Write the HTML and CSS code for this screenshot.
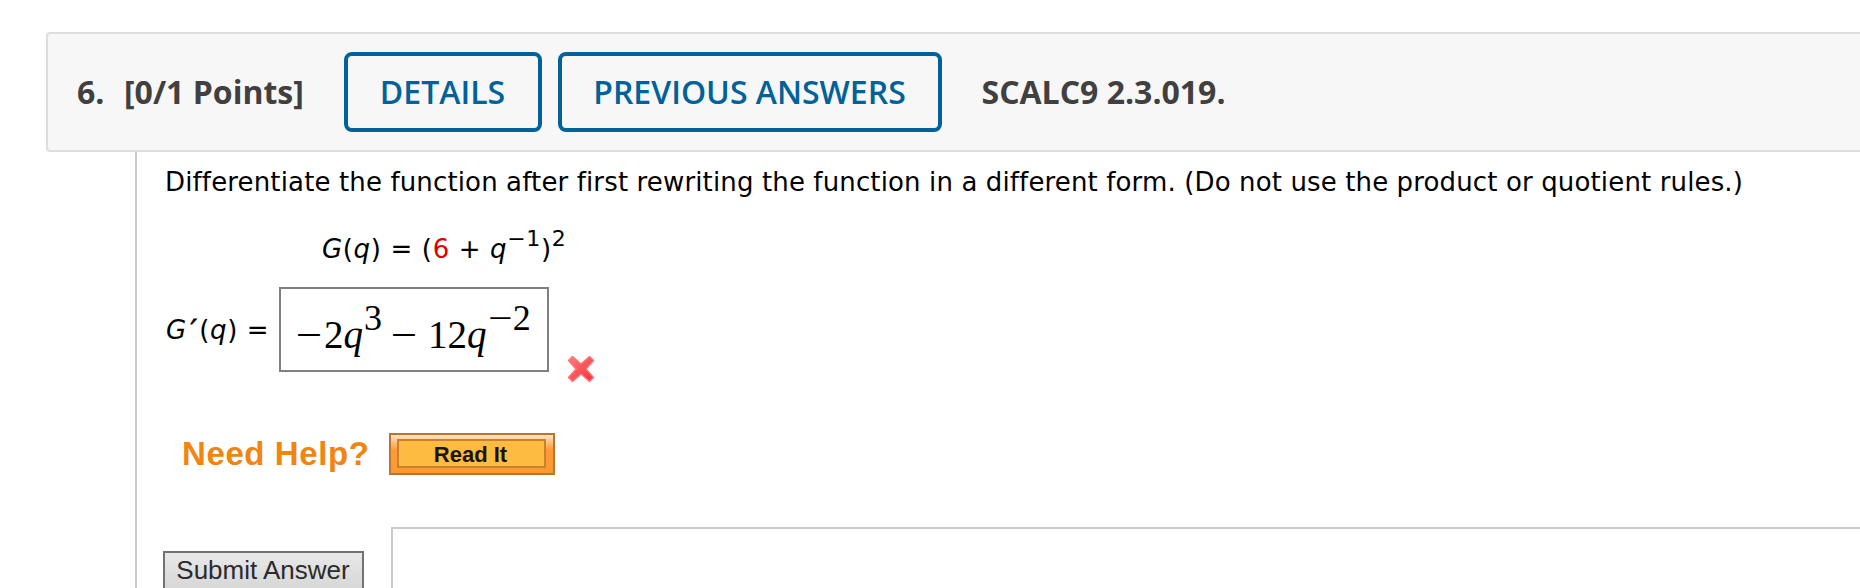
FILE: index.html
```
<!DOCTYPE html>
<html lang="en">
<head>
    <meta charset="UTF-8">
    <meta name="viewport" content="width=device-width, initial-scale=1.0">
    <title>SCALC9 2.3.019</title>
    <link rel="stylesheet" href="styles.css">
</head>
<body>

<div class="question">
    <header class="question-header">
        <span class="number">6.</span>
        <span class="points">[0/1 Points]</span>
        <button class="btn details">DETAILS</button>
        <button class="btn previous">PREVIOUS ANSWERS</button>
        <span class="source">SCALC9 2.3.019.</span>
    </header>

    <div class="question-body">
        <p class="prompt">Differentiate the function after first rewriting the function in a different form. (Do not use the product or quotient rules.)</p>

        <div class="equation"><i>G</i>(<i>q</i>) = (<span class="value">6</span> + <i>q</i><sup>−1</sup>)<sup>2</sup></div>

        <!-- Submitted answer -->
        <div class="answer">
            <span class="answer-label"><i>G</i><i class="prime">′</i>(<i>q</i>) =</span>
            <div class="answer-box"><span class="minus sign">−</span><span>2</span><i>q</i><sup>3</sup><span class="minus operator">−</span><span>12</span><i>q</i><sup><span class="minus sign">−</span>2</sup></div>
            <svg class="wrong" width="28" height="28" viewBox="0 0 28 28">
                <defs>
                    <linearGradient id="cross" x1="0" y1="0" x2="1" y2="1">
                        <stop offset="0" stop-color="#ff8080"/>
                        <stop offset="0.5" stop-color="#fa5558"/>
                        <stop offset="1" stop-color="#ee3338"/>
                    </linearGradient>
                </defs>
                <path d="M5.5 1.5L14 9L22.5 1.5L26.5 5.5L19 14L26.5 22.5L22.5 26.5L14 19L5.5 26.5L1.5 22.5L9 14L1.5 5.5Z" fill="url(#cross)" stroke="#ff7478" stroke-width="1.5" stroke-linejoin="round"/>
            </svg>
        </div>

        <div class="help">
            <span class="help-title">Need Help?</span>
            <button class="read-it"><span>Read It</span></button>
        </div>

        <div class="actions">
            <button class="submit">Submit Answer</button>
            <div class="panel"></div>
        </div>
    </div>
</div>

</body>
</html>
```
FILE: styles.css
```
* {
    margin: 0;
    padding: 0;
    box-sizing: border-box;
}

body {
    height: 588px;
    background: #fff;
    color: #000;
    font-family: Verdana, "DejaVu Sans", sans-serif;
    font-size: 26px;
    line-height: 32px;
    overflow: hidden;
}

.question {
    padding: 32px 0 0 46px;
}

.question-header {
    display: flex;
    align-items: center;
    height: 120px;
    padding-left: 29px;
    border: 2px solid #ddd;
    border-right: none;
    border-radius: 4px 0 0 4px;
    background: #f7f7f7;
    color: #404040;
    font-family: "Open Sans", sans-serif;
    font-size: 32px;
    font-weight: 700;
    line-height: 44px;
    white-space: nowrap;
}

.number {
    width: 47px;
}

.points {
    width: 220px;
}

.btn {
    height: 80px;
    padding: 0 1px 2px 0;
    border: 4px solid #006298;
    border-radius: 8px;
    background: transparent;
    color: #006298;
    font-family: inherit;
    font-size: 32px;
    font-weight: 600;
}

.details {
    width: 198px;
    margin-right: 16px;
}

.previous {
    width: 384px;
    margin-right: 39.5px;
}

.question-body {
    height: 440px;
    margin-left: 89px;
    padding: 14px 0 0 28px;
    border-left: 2px solid #ccc;
}

.prompt {
    letter-spacing: 0.15px;
    word-spacing: -0.1px;
    white-space: nowrap;
}

.equation {
    height: 32px;
    margin: 35px 0 0 157px;
    letter-spacing: 0.65px;
    white-space: nowrap;
}

.equation sup {
    font-size: 22px;
    line-height: 0;
    vertical-align: 12px;
}

.value {
    color: #d00;
}

.answer {
    display: flex;
    height: 96px;
    margin-top: 22px;
}

.answer-label {
    width: 114px;
    padding: 27px 0 0 1px;
    letter-spacing: 0.6px;
    white-space: nowrap;
}

.prime {
    margin: 0 2px 0 4px;
    -webkit-text-stroke: 0.8px #000;
}

.answer-box {
    width: 270px;
    height: 85px;
    padding-left: 17px;
    border: 2px solid #808080;
    font-family: "Liberation Serif", serif;
    font-size: 39px;
    line-height: 92px;
    white-space: nowrap;
}

.answer-box sup {
    margin-left: 1px;
    font-size: 36px;
    line-height: 0;
    vertical-align: 18px;
}

.minus {
    display: inline-block;
    transform: scaleX(1.2);
}

.sign {
    margin-right: 4px;
}

.answer-box sup .sign {
    margin: 0 3px 0 2px;
}

.operator {
    margin: 0 13px 0 11px;
}

.wrong {
    margin: 68px 0 0 18px;
}

.help {
    display: flex;
    height: 42px;
    margin: 50px 0 0 17px;
}

.help-title {
    width: 207px;
    color: #f08510;
    font: bold 33px/42px "Liberation Sans", sans-serif;
    letter-spacing: 0.6px;
}

.read-it {
    width: 166px;
    height: 42px;
    padding: 4px 7px 5px 6px;
    border: 2px solid #b87530;
    background: linear-gradient(#ffe4c4, #ff9a35 40%, #fb9a32);
}

.read-it span {
    display: block;
    height: 29px;
    padding-right: 2px;
    border: 2px solid #c9812c;
    background: #fdbb42;
    color: #1c1400;
    font: bold 22px/27px "Liberation Sans", sans-serif;
}

.actions {
    display: flex;
    height: 61px;
    margin: 52px 0 0 -2px;
}

.submit {
    width: 201px;
    height: 46px;
    margin: 24px 27px 0 0;
    padding: 0 1px 8px 0;
    border: 2px solid #707370;
    background: linear-gradient(#e8e8e8, #d4d4d4);
    color: #2b2b2b;
    font: 26px/32px "Liberation Sans", sans-serif;
}

.panel {
    flex: 1;
    height: 80px;
    border: 2px solid #ccc;
    border-right: none;
}
```
